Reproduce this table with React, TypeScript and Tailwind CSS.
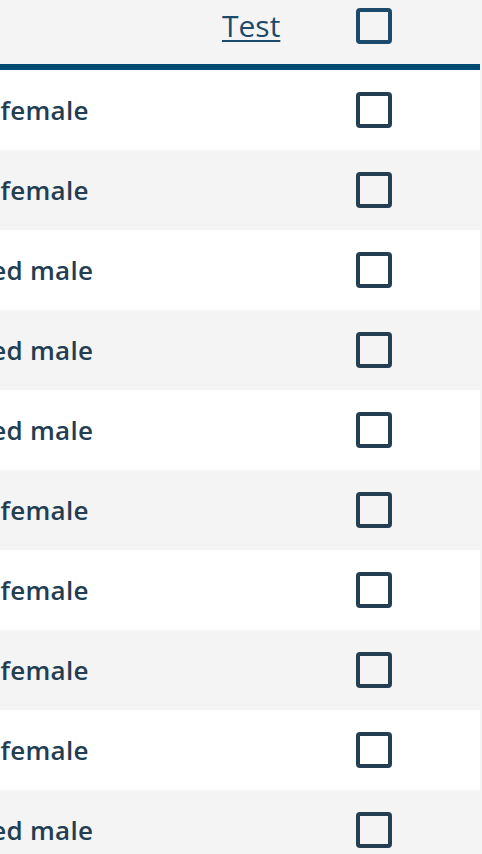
import React from "react";

const rows = [
  "Spayed female",
  "Spayed female",
  "Neutered male",
  "Neutered male",
  "Neutered male",
  "Spayed female",
  "Spayed female",
  "Spayed female",
  "Spayed female",
  "Neutered male",
];

function Box({ header }: { header?: boolean }) {
  return (
    <div
      className={
        "w-9 h-9 shrink-0 rounded-[4px] border-4 bg-transparent " +
        (header ? "border-[#1c4a6c]" : "border-[#243e52]")
      }
    />
  );
}

export default function App() {
  return (
    <div
      className="w-[482px] h-[854px] overflow-hidden bg-[#f4f4f4]"
      style={{ fontFamily: '"Open Sans", "Liberation Sans", sans-serif' }}
    >
      <div className="w-[480px]">
        <div className="h-[70px] bg-[#f4f4f4] border-b-[6px] border-[#004b73] flex items-start pt-2 pl-[222px]">
          <div className="w-[134px] h-9 flex items-center">
            <span className="text-[30px] leading-none text-[#1c4a6c] underline decoration-2 underline-offset-[3px]">
              Test
            </span>
          </div>
          <Box header />
        </div>
        {rows.map((r, i) => (
          <div
            key={i}
            className={
              "h-[80px] flex items-center overflow-hidden " +
              (i % 2 === 0 ? "bg-white" : "bg-[#f4f4f4]")
            }
          >
            <div className="ml-[-99px] w-[455px] shrink-0 text-[26px] font-semibold tracking-[0.3px] leading-none text-[#233e52] whitespace-nowrap">
              {r}
            </div>
            <Box />
          </div>
        ))}
      </div>
    </div>
  );
}
